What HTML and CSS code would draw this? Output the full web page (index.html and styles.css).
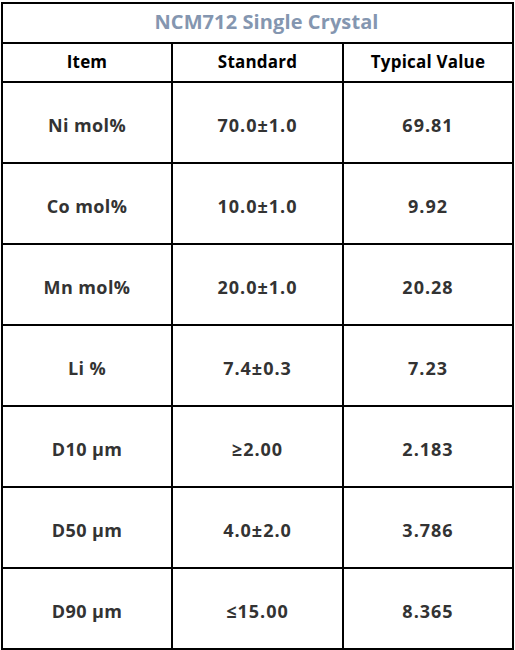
FILE: index.html
```html
<!DOCTYPE html>
<html>
<head>
<meta charset="utf-8">
<link rel="stylesheet" href="styles.css">
</head>
<body>
<div class="table">
  <div class="cell title">NCM712 Single Crystal</div>
  <div class="cell head">Item</div>
  <div class="cell head">Standard</div>
  <div class="cell head">Typical Value</div>
  <div class="cell">Ni mol%</div><div class="cell num">70.0±1.0</div><div class="cell num">69.81</div>
  <div class="cell">Co mol%</div><div class="cell num">10.0±1.0</div><div class="cell num">9.92</div>
  <div class="cell">Mn mol%</div><div class="cell num">20.0±1.0</div><div class="cell num">20.28</div>
  <div class="cell">Li %</div><div class="cell num">7.4±0.3</div><div class="cell num">7.23</div>
  <div class="cell">D10 µm</div><div class="cell num">≥2.00</div><div class="cell num">2.183</div>
  <div class="cell">D50 µm</div><div class="cell num">4.0±2.0</div><div class="cell num">3.786</div>
  <div class="cell">D90 µm</div><div class="cell num">≤15.00</div><div class="cell num">8.365</div>
</div>
</body>
</html>
```
FILE: styles.css
```css
html, body { margin: 0; padding: 0; background: #fff; }
body { padding: 2px 0 0 1px; }
.table {
  width: 513px;
  box-sizing: border-box;
  background: #000;
  padding: 2px;
  display: grid;
  grid-template-columns: 168px 169px 168px;
  grid-template-rows: 38px 37px repeat(7, 79px);
  gap: 2px;
  font-family: "Open Sans", "Noto Sans", sans-serif;
  font-weight: 700;
}
.cell {
  background: #fff;
  display: flex;
  align-items: center;
  justify-content: center;
  color: #333;
  font-size: 18px;
  letter-spacing: 0.4px;
  padding-top: 4px;
  box-sizing: border-box;
}
.num {
  letter-spacing: 1px;
}
.title {
  grid-column: 1 / 4;
  color: #8496b0;
  font-size: 20px;
  letter-spacing: 0.1px;
  padding-top: 0;
  padding-bottom: 3px;
  padding-left: 18px;
}
.head {
  color: #000;
  font-size: 17px;
  letter-spacing: 0.2px;
  padding-top: 0;
  padding-bottom: 3px;
}
```
